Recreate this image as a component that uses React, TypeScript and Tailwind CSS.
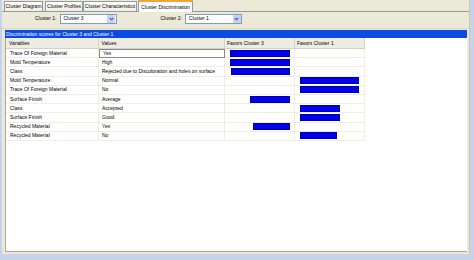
import React from "react";

type Row = { v: string; val: string; side: 3 | 1; w: number };

const rows: Row[] = [
  { v: "Trace Of Foreign Material", val: "Yes", side: 3, w: 57.6 },
  { v: "Mold Temperature", val: "High", side: 3, w: 57.6 },
  { v: "Class", val: "Rejected due to Discoloration and holes on surface", side: 3, w: 57 },
  { v: "Mold Temperature", val: "Normal", side: 1, w: 57.3 },
  { v: "Trace Of Foreign Material", val: "No", side: 1, w: 57.3 },
  { v: "Surface Finish", val: "Average", side: 3, w: 38 },
  { v: "Class", val: "Accepted", side: 1, w: 38.3 },
  { v: "Surface Finish", val: "Good", side: 1, w: 38.3 },
  { v: "Recycled Material", val: "Yes", side: 3, w: 35 },
  { v: "Recycled Material", val: "No", side: 1, w: 35 },
];

function Select({ label }: { label: string }) {
  return (
    <div className="flex h-[10.5px] w-[57px] items-stretch border border-[#7f9db9] bg-white">
      <div className="flex flex-1 items-center pl-[2.5px]">{label}</div>
      <div className="m-[0.5px] flex w-[8px] items-center justify-center rounded-[1px] bg-[#c3d3f8]">
        <svg width="5" height="4" viewBox="0 0 5 4">
          <path d="M0.8 1 L2.5 2.8 L4.2 1" stroke="#4d6185" strokeWidth="1.1" fill="none" />
        </svg>
      </div>
    </div>
  );
}

function Tab({ label, w, active }: { label: string; w: number; active?: boolean }) {
  return (
    <div
      style={{ width: w }}
      className={
        active
          ? "relative -mb-px flex h-[12px] items-center justify-center rounded-t-[1px] border-x border-t-2 border-[#919b9c] border-t-[#f3a33a] bg-white"
          : "flex h-[10px] items-center justify-center rounded-t-[1px] border-x border-t border-[#919b9c] bg-gradient-to-b from-white to-[#f1efe4]"
      }
    >
      {label}
    </div>
  );
}

export default function App() {
  return (
    <div className="flex h-[260px] w-[474px] flex-col bg-[#c6d3ea] pb-[6px] pl-[2px] pr-[4px] font-['Liberation_Sans',Arial,sans-serif] text-[5px] leading-none text-black">
      <div className="flex flex-1 flex-col border-r border-[#c8c5b4] bg-[#ece9d8]">
        {/* Tabs */}
        <div className="flex h-[12px] items-end border-b border-[#919b9c] pl-[2px]">
          <Tab label="Cluster Diagram" w={39} />
          <div className="w-[2px]" />
          <Tab label="Cluster Profiles" w={38} />
          <Tab label="Cluster Characteristics" w={54} />
          <div className="w-[1px]" />
          <Tab label="Cluster Discrimination" w={55} active />
        </div>
        {/* Selects */}
        <div className="flex h-[17px] flex-col border-b border-[#d9d5c3]">
          <div className="flex items-center pl-[33px] pt-[1.5px]">
            <span>Cluster 1:</span>
            <div className="w-[3.5px]" />
            <Select label="Cluster 3" />
            <div className="w-[43.5px]" />
            <span>Cluster 2:</span>
            <div className="w-[3.5px]" />
            <Select label="Cluster 1" />
          </div>
        </div>
        {/* Main */}
        <div className="mb-[2px] ml-[3px] mr-[2px] mt-[1px] flex flex-1 flex-col">
          <div className="flex h-[8px] items-center bg-[#0a4be0] pl-[1px] text-white">
            Discrimination scores for Cluster 3 and Cluster 1
          </div>
          <div className="flex-1 border-b border-l border-[#aca899] bg-white">
            <div className="grid grid-cols-[93px_125.5px_70px_70.5px]">
              {["Variables", "Values", "Favors Cluster 3", "Favors Cluster 1"].map((h, i) => (
                <div
                  key={h}
                  className={
                    "flex h-[11px] items-center border-b border-r border-[#d6d2c2] bg-[#efede3] " +
                    (i === 0 ? "pl-[3px]" : "pl-[2.5px]")
                  }
                >
                  {h}
                </div>
              ))}
              {rows.map((r, i) => (
                <React.Fragment key={i}>
                  <div className="flex h-[9.2px] items-center border-b border-r border-[#f1eedf] pl-[4px]">
                    {r.v}
                  </div>
                  <div
                    className={
                      "flex h-[9.2px] items-center border-b border-r pl-[3px] " +
                      (i === 0 ? "border-l border-t border-[#8a8a8a]" : "border-[#f1eedf]")
                    }
                  >
                    {r.val}
                  </div>
                  <div className="flex h-[9.2px] items-center justify-end border-b border-r border-[#f1eedf] pr-[5px]">
                    {r.side === 3 && (
                      <div className="h-[5px] bg-[#0000ee] outline outline-[0.5px] outline-[#0000a0]" style={{ width: r.w }} />
                    )}
                  </div>
                  <div className="flex h-[9.2px] items-center border-b border-r border-[#f1eedf] pl-[6px]">
                    {r.side === 1 && (
                      <div className="h-[5px] bg-[#0000ee] outline outline-[0.5px] outline-[#0000a0]" style={{ width: r.w }} />
                    )}
                  </div>
                </React.Fragment>
              ))}
            </div>
          </div>
        </div>
      </div>
    </div>
  );
}
